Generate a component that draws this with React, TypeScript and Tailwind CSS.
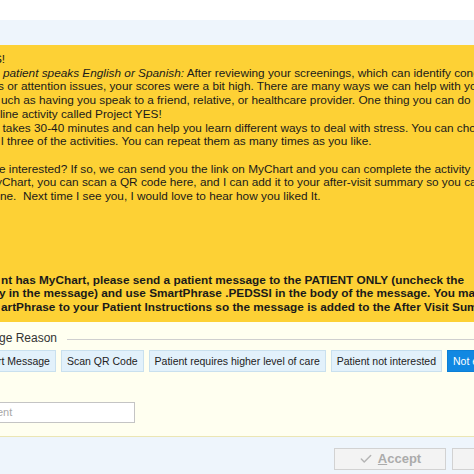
import { Check } from "lucide-react";

const bodyLines: { text: React.ReactNode; indent: string }[] = [
  { text: "S!", indent: "ml-[-6px]" },
  {
    text: (
      <>
        <i>patient speaks English or Spanish:</i> After reviewing your screenings, which can identify concerns
      </>
    ),
    indent: "ml-[3px]",
  },
  {
    text: "s or attention issues, your scores were a bit high. There are many ways we can help with your",
    indent: "ml-[-2px]",
  },
  {
    text: "uch as having you speak to a friend, relative, or healthcare provider. One thing you can do can",
    indent: "ml-[1px]",
  },
  { text: "line activity called Project YES!", indent: "ml-[0px]" },
  {
    text: "t takes 30-40 minutes and can help you learn different ways to deal with stress. You can choose",
    indent: "ml-[-4px]",
  },
  { text: "l three of the activities. You can repeat them as many times as you like.", indent: "ml-[1px]" },
  { text: "\u00a0", indent: "" },
  {
    text: "e interested? If so, we can send you the link on MyChart and you can complete the activity on",
    indent: "ml-[-1px]",
  },
  {
    text: "yChart, you can scan a QR code here, and I can add it to your after-visit summary so you can",
    indent: "ml-[-4px]",
  },
  { text: "ne.  Next time I see you, I would love to hear how you liked It.", indent: "ml-[0px]" },
];

const boldLines: { text: string; indent: string }[] = [
  { text: "nt has MyChart, please send a patient message to the PATIENT ONLY (uncheck the", indent: "ml-[1px]" },
  {
    text: "y in the message) and use SmartPhrase .PEDSSI in the body of the message. You may",
    indent: "ml-[-1px]",
  },
  {
    text: "artPhrase to your Patient Instructions so the message is added to the After Visit Summary",
    indent: "ml-[1px]",
  },
];

const reasons = [
  { label: "rt Message", first: true },
  { label: "Scan QR Code" },
  { label: "Patient requires higher level of care" },
  { label: "Patient not interested" },
  { label: "Not eligible", active: true },
];

export default function App() {
  return (
    <div className="flex h-[474px] w-[474px] flex-col overflow-hidden bg-white font-['Liberation_Sans',Arial,sans-serif] text-[#1a1a1a]">
      <div className="h-[20px] shrink-0 bg-white" />
      <div className="h-[25px] shrink-0 bg-[#eef5fc]" />

      <div className="h-[277px] shrink-0 overflow-hidden bg-[#fdd135] pt-[8px] text-[11.8px] leading-[13.7px] whitespace-pre">
        {bodyLines.map((l, i) => (
          <div key={i} className={l.indent}>
            {l.text}
          </div>
        ))}
        <div className="h-[70px]" />
        <div className="font-bold">
          {boldLines.map((l, i) => (
            <div key={i} className={l.indent}>
              {l.text}
            </div>
          ))}
        </div>
      </div>

      <div className="h-[115px] shrink-0 overflow-hidden border-b border-[#ebe6b4] bg-[#fffff0]">
        <div className="mt-[8px] flex items-center">
          <span className="ml-[-1px] whitespace-nowrap text-[12px] leading-[16px] text-[#333]">ge Reason</span>
          <div className="ml-[10px] mt-[3px] h-px flex-1 bg-[#cfcfcf]" />
        </div>
        <div className="mt-[4px] flex gap-[5px] whitespace-nowrap">
          {reasons.map((r) => (
            <div
              key={r.label}
              className={`shrink-0 border px-[5px] text-[10.5px] leading-[20px] ${
                r.first ? "ml-[-8px]" : ""
              } ${
                r.active
                  ? "border-[#0b7fd6] bg-[#1188e2] text-white"
                  : "border-[#c9e0ee] bg-[#e2f1fb] text-[#222]"
              }`}
            >
              {r.label}
            </div>
          ))}
        </div>
        <div className="ml-[-8px] mt-[30px] h-[21px] w-[143px] border border-[#c4c4c4] bg-white pl-[4px] text-[11px] leading-[19px] text-[#a8a8a8]">
          ent
        </div>
      </div>

      <div className="flex flex-1 items-start justify-end gap-[6px] bg-[#eef5fc] pt-[11px]">
        <div className="flex h-[22px] w-[112px] shrink-0 items-center justify-center gap-[5px] border border-[#d2d2d2] bg-[#f3f3f3] text-[13px] font-bold text-[#ababab]">
          <Check size={14} strokeWidth={2.5} className="text-[#b5b5b5]" />
          <span>
            <span className="underline">A</span>ccept
          </span>
        </div>
        <div className="mr-[-90px] h-[22px] w-[112px] shrink-0 border border-[#d2d2d2] bg-[#f3f3f3]" />
      </div>
    </div>
  );
}
